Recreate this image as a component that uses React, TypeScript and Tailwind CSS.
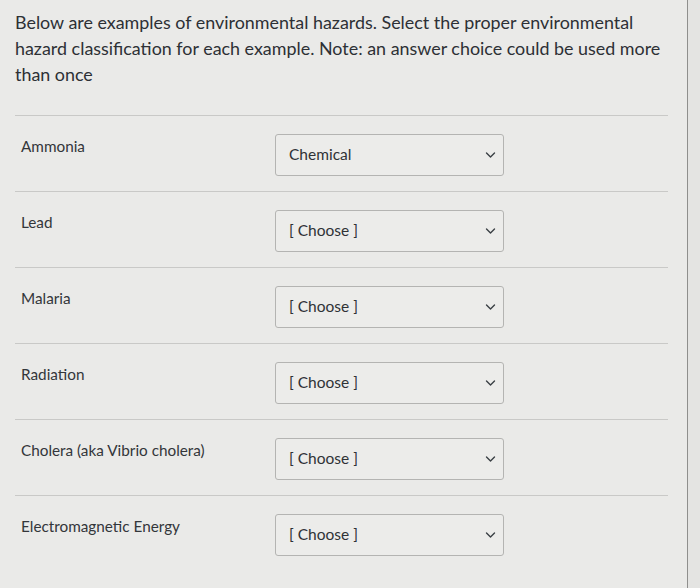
import React from 'react';

const rows = [
  { label: 'Ammonia', value: 'Chemical' },
  { label: 'Lead', value: '[ Choose ]' },
  { label: 'Malaria', value: '[ Choose ]' },
  { label: 'Radiation', value: '[ Choose ]' },
  { label: 'Cholera (aka Vibrio cholera)', value: '[ Choose ]' },
  { label: 'Electromagnetic Energy', value: '[ Choose ]' },
];

function Chevron() {
  return (
    <svg width="11" height="8" viewBox="0 0 11 8" fill="none">
      <path d="M1.5 2 L5.5 6 L9.5 2" stroke="#3a3f44" strokeWidth="1.4" strokeLinecap="round" strokeLinejoin="round" />
    </svg>
  );
}

export default function App() {
  return (
    <div className="w-[700px] h-[588px] overflow-hidden bg-[#e4e4e2] flex" style={{ fontFamily: 'Lato, "Open Sans", sans-serif' }}>
      <div className="w-[688px] h-full bg-[#eaeae8] border-r border-[#8f8f8d] pl-[15px]">
        <div className="w-[653px] text-[#2d3035]">
          <p className="pt-[9px] text-[17.9px] leading-[26px] pb-[28px]">
            Below are examples of environmental hazards. Select the proper environmental hazard classification for each example. Note: an answer choice could be used more than once
          </p>
          {rows.map((r) => (
            <div key={r.label} className="border-t border-[#c9c9c7] flex items-start pl-[6px] pt-[18px] pb-[15px]">
              <div className="w-[254px] pt-[3px] text-[15.3px] leading-[18px] text-[#33363a]">{r.label}</div>
              <div className="w-[229px] h-[42px] border border-[#b4b4b2] rounded-[3px] bg-[#ececea] flex items-center justify-between pl-[13px] pr-[7px]">
                <span className="text-[15.5px] text-[#2f3236]">{r.value}</span>
                <Chevron />
              </div>
            </div>
          ))}
        </div>
      </div>
    </div>
  );
}
